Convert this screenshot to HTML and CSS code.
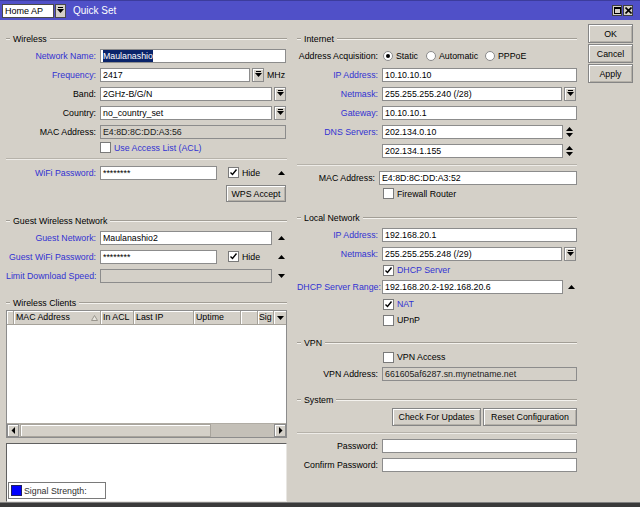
FILE: index.html
```html
<!DOCTYPE html>
<html>
<head>
<meta charset="utf-8">
<title>Quick Set</title>
<link rel="stylesheet" href="styles.css">
</head>
<body>
<div class="titlebar">
  <div class="profile">Home AP</div>
  <div class="tbtn"><svg width="7" height="7" viewBox="0 0 7 7"><rect x="1" y="0" width="5" height="1"/><path d="M0 2h7L3.5 6z"/></svg></div>
  <div class="title">Quick Set</div>
  <div class="winctl">
    <div class="wc"><svg width="7" height="7" viewBox="0 0 7 7"><rect x="0.5" y="0.5" width="6" height="6" fill="none" stroke="#000"/><rect x="0" y="0" width="7" height="2"/></svg></div>
    <div class="wc"><svg width="7" height="7" viewBox="0 0 7 7"><path d="M0.5 0.5L6.5 6.5M6.5 0.5L0.5 6.5" stroke="#000" stroke-width="1.6"/></svg></div>
  </div>
</div>

<div class="main">
  <div class="col left">
    <div class="head"><span class="hl short"></span><span class="ht">Wireless</span><span class="hl"></span></div>
    <div class="row"><span class="lbl blue">Network Name:</span><div class="inp w186"><span class="sel">Maulanashio</span></div></div>
    <div class="row"><span class="lbl blue">Frequency:</span><div class="inp w150">2417</div><div class="ddb ml2"><svg width="7" height="7" viewBox="0 0 7 7"><rect x="1" y="0" width="5" height="1"/><path d="M0 2h7L3.5 6z"/></svg></div><span class="unit">MHz</span></div>
    <div class="row"><span class="lbl">Band:</span><div class="inp w172">2GHz-B/G/N</div><div class="ddb ml2"><svg width="7" height="7" viewBox="0 0 7 7"><rect x="1" y="0" width="5" height="1"/><path d="M0 2h7L3.5 6z"/></svg></div></div>
    <div class="row"><span class="lbl">Country:</span><div class="inp w172">no_country_set</div><div class="ddb ml2"><svg width="7" height="7" viewBox="0 0 7 7"><rect x="1" y="0" width="5" height="1"/><path d="M0 2h7L3.5 6z"/></svg></div></div>
    <div class="row"><span class="lbl">MAC Address:</span><div class="inp dis w186">E4:8D:8C:DD:A3:56</div></div>
    <div class="cbrow h13"><span class="cb"></span><span class="cbt blue">Use Access List (ACL)</span></div>
    <div class="sep"></div>
    <div class="row"><span class="lbl blue">WiFi Password:</span><div class="inp w117">********</div><span class="cb ml11"><svg width="9" height="9" viewBox="0 0 9 9"><path d="M1.5 4.5l2 2 4-5" fill="none" stroke="#000" stroke-width="1.4"/></svg></span><span class="cbt">Hide</span><svg class="tri" width="7" height="4" viewBox="0 0 7 4"><path d="M0 4L3.5 0L7 4z"/></svg></div>
    <div class="btnrow"><div class="btn wps">WPS Accept</div></div>

    <div class="head mt11"><span class="hl short"></span><span class="ht">Guest Wireless Network</span><span class="hl"></span></div>
    <div class="row"><span class="lbl blue">Guest Network:</span><div class="inp w172">Maulanashio2</div><svg class="tri" width="7" height="4" viewBox="0 0 7 4"><path d="M0 4L3.5 0L7 4z"/></svg></div>
    <div class="row"><span class="lbl blue">Guest WiFi Password:</span><div class="inp w117">********</div><span class="cb ml11"><svg width="9" height="9" viewBox="0 0 9 9"><path d="M1.5 4.5l2 2 4-5" fill="none" stroke="#000" stroke-width="1.4"/></svg></span><span class="cbt">Hide</span><svg class="tri" width="7" height="4" viewBox="0 0 7 4"><path d="M0 4L3.5 0L7 4z"/></svg></div>
    <div class="row"><span class="lbl blue">Limit Download Speed:</span><div class="inp dis w172"></div><svg class="tri" width="7" height="4" viewBox="0 0 7 4"><path d="M0 0h7L3.5 4z"/></svg></div>

    <div class="head mt10"><span class="hl short"></span><span class="ht">Wireless Clients</span><span class="hl"></span></div>
    <div class="table">
      <div class="thead">
        <div class="th c0"></div>
        <div class="th c1">MAC Address<svg class="sort" width="7" height="6" viewBox="0 0 7 6"><path d="M0.5 5.5L3.5 0.5L6.5 5.5z" fill="#e8e6e0" stroke="#9a968e"/></svg></div>
        <div class="th c2">In ACL</div>
        <div class="th c3">Last IP</div>
        <div class="th c4">Uptime</div>
        <div class="th c5"></div>
        <div class="th c6">Sig</div>
        <div class="th c7"><svg width="7" height="4" viewBox="0 0 7 4"><path d="M0 0h7L3.5 4z"/></svg></div>
      </div>
      <div class="tbody"></div>
      <div class="hscroll">
        <div class="sbtn"><svg width="5" height="7" viewBox="0 0 5 7"><path d="M4 0v7L0.5 3.5z"/></svg></div>
        <div class="thumb"></div>
        <div class="track"></div>
        <div class="sbtn"><svg width="5" height="7" viewBox="0 0 5 7"><path d="M1 0v7L4.5 3.5z"/></svg></div>
      </div>
    </div>
    <div class="panel">
      <div class="legend"><span class="swatch"></span><span>Signal Strength:</span></div>
    </div>
  </div>

  <div class="col right">
    <div class="head"><span class="hl short"></span><span class="ht">Internet</span><span class="hl"></span></div>
    <div class="row"><span class="lbl">Address Acquisition:</span>
      <span class="opt o1"><span class="radio on"></span><span class="cbt">Static</span></span>
      <span class="opt o2"><span class="radio"></span><span class="cbt">Automatic</span></span>
      <span class="opt"><span class="radio"></span><span class="cbt">PPPoE</span></span>
    </div>
    <div class="row"><span class="lbl blue">IP Address:</span><div class="inp w195">10.10.10.10</div></div>
    <div class="row"><span class="lbl blue">Netmask:</span><div class="inp w180">255.255.255.240 (/28)</div><div class="ddb ml2"><svg width="7" height="7" viewBox="0 0 7 7"><rect x="1" y="0" width="5" height="1"/><path d="M0 2h7L3.5 6z"/></svg></div></div>
    <div class="row"><span class="lbl blue">Gateway:</span><div class="inp w195">10.10.10.1</div></div>
    <div class="row"><span class="lbl blue">DNS Servers:</span><div class="inp w181">202.134.0.10</div><svg class="ud" width="7" height="10" viewBox="0 0 7 10"><path d="M0 4L3.5 0L7 4zM0 6h7L3.5 10z"/></svg></div>
    <div class="row"><span class="lbl"></span><div class="inp w181">202.134.1.155</div><svg class="ud" width="7" height="10" viewBox="0 0 7 10"><path d="M0 4L3.5 0L7 4zM0 6h7L3.5 10z"/></svg></div>
    <div class="sep s8"></div>
    <div class="row"><span class="lbl narrow">MAC Address:</span><div class="inp w198">E4:8D:8C:DD:A3:52</div></div>
    <div class="cbrow h13"><span class="cb"></span><span class="cbt">Firewall Router</span></div>

    <div class="head mt10"><span class="hl short"></span><span class="ht">Local Network</span><span class="hl"></span></div>
    <div class="row"><span class="lbl blue">IP Address:</span><div class="inp w195">192.168.20.1</div></div>
    <div class="row"><span class="lbl blue">Netmask:</span><div class="inp w180">255.255.255.248 (/29)</div><div class="ddb ml2"><svg width="7" height="7" viewBox="0 0 7 7"><rect x="1" y="0" width="5" height="1"/><path d="M0 2h7L3.5 6z"/></svg></div></div>
    <div class="cbrow h14"><span class="cb"><svg width="9" height="9" viewBox="0 0 9 9"><path d="M1.5 4.5l2 2 4-5" fill="none" stroke="#000" stroke-width="1.4"/></svg></span><span class="cbt blue">DHCP Server</span></div>
    <div class="row"><span class="lbl blue">DHCP Server Range:</span><div class="inp w181">192.168.20.2-192.168.20.6</div><svg class="tri2" width="7" height="4" viewBox="0 0 7 4"><path d="M0 4L3.5 0L7 4z"/></svg></div>
    <div class="cbrow h16"><span class="cb"><svg width="9" height="9" viewBox="0 0 9 9"><path d="M1.5 4.5l2 2 4-5" fill="none" stroke="#000" stroke-width="1.4"/></svg></span><span class="cbt blue">NAT</span></div>
    <div class="cbrow h16"><span class="cb"></span><span class="cbt">UPnP</span></div>

    <div class="head mt7"><span class="hl short"></span><span class="ht">VPN</span><span class="hl"></span></div>
    <div class="cbrow h14"><span class="cb"></span><span class="cbt">VPN Access</span></div>
    <div class="row"><span class="lbl">VPN Address:</span><div class="inp dis w195">661605af6287.sn.mynetname.net</div></div>

    <div class="head mt9"><span class="hl short"></span><span class="ht">System</span><span class="hl"></span></div>
    <div class="sysrow"><div class="btn chk">Check For Updates</div><div class="btn rst">Reset Configuration</div></div>
    <div class="sep s9"></div>
    <div class="row"><span class="lbl">Password:</span><div class="inp w195"></div></div>
    <div class="row"><span class="lbl">Confirm Password:</span><div class="inp w195"></div></div>
  </div>

  <div class="col btns">
    <div class="btn side">OK</div>
    <div class="btn side">Cancel</div>
    <div class="btn side">Apply</div>
  </div>
</div>
<div class="bottom"></div>
</body>
</html>
```

FILE: styles.css
```css
html, body {
  margin: 0;
  padding: 0;
}
body {
  width: 640px;
  height: 507px;
  overflow: hidden;
  background: #d4d0c8;
  font-family: "Liberation Sans", Arial, sans-serif;
  font-size: 8.8px;
  color: #000;
  display: flex;
  flex-direction: column;
}

/* title bar */
.titlebar {
  height: 20px;
  flex: none;
  background: #5050c8;
  display: flex;
  align-items: center;
  box-sizing: border-box;
  border-top: 1px solid #3c3c9c;
}
.profile {
  margin-left: 2px;
  width: 52px;
  height: 14px;
  box-sizing: border-box;
  border: 1px solid #4a4a4a;
  background: #fff;
  padding-left: 2px;
  line-height: 12px;
  font-size: 9px;
}
.tbtn {
  margin-left: 1px;
  width: 11px;
  height: 14px;
  box-sizing: border-box;
  border: 1px solid #4a4a4a;
  background: #d4d0c8;
  display: flex;
  align-items: center;
  justify-content: center;
}
.title {
  margin-left: 7px;
  color: #fff;
  font-size: 10px;
}
.winctl {
  margin-left: auto;
  margin-right: 7px;
  display: flex;
  gap: 1px;
}
.wc {
  width: 10px;
  height: 11px;
  box-sizing: border-box;
  border: 1px solid #404040;
  background: #d4d0c8;
  display: flex;
  align-items: center;
  justify-content: center;
}

/* main */
.main {
  flex: 1;
  display: flex;
  padding-left: 6px;
}
.col {
  display: flex;
  flex-direction: column;
  padding-top: 11px;
}
.left { width: 281px; }
.right { width: 280px; margin-left: 10px; }
.btns { width: 45px; margin-left: 11px; padding-top: 3px; }

.bottom {
  height: 4px;
  flex: none;
  background: #3a3a3a;
  border-top: 1px solid #808080;
}

/* section heading */
.head {
  height: 15px;
  flex: none;
  display: flex;
  align-items: center;
}
.hl {
  flex: 1;
  height: 0;
  border-top: 1px solid #a29e96;
  border-bottom: 1px solid #f4f2ee;
}
.hl.short { flex: none; width: 4px; }
.ht { padding: 0 3px; }
.mt7 { margin-top: 7px; }
.mt9 { margin-top: 9px; }
.mt10 { margin-top: 10px; }
.mt11 { margin-top: 11px; }

.sep {
  height: 9px;
  flex: none;
  box-sizing: border-box;
  padding-top: 4px;
}
.sep::before {
  content: "";
  display: block;
  border-top: 1px solid #b6b2aa;
  border-bottom: 1px solid #eeece8;
}
.sep.s8 { height: 8px; }
.sep.s9 { padding-top: 5px; }

/* rows */
.row {
  height: 19px;
  flex: none;
  display: flex;
  align-items: center;
}
.lbl {
  flex: none;
  width: 90px;
  padding-right: 4px;
  text-align: right;
  white-space: nowrap;
}
.right .lbl { width: 81px; }
.right .lbl.narrow { width: 78px; }
.blue { color: #3232d2; }

.inp {
  flex: none;
  height: 14px;
  box-sizing: border-box;
  border: 1px solid #8c8c8c;
  background: #fff;
  padding: 0 2px;
  line-height: 12px;
  white-space: nowrap;
  overflow: hidden;
}
.inp.dis { background: #d4d0c8; color: #202020; }
.sel { background: #0a246a; color: #fff; display: inline-block; height: 12px; }
.w117 { width: 117px; }
.w150 { width: 150px; }
.w172 { width: 172px; }
.w180 { width: 180px; }
.w181 { width: 181px; }
.w186 { width: 186px; }
.w195 { width: 195px; }
.w198 { width: 198px; }

.ddb {
  flex: none;
  width: 12px;
  height: 14px;
  box-sizing: border-box;
  border: 1px solid #8c8c8c;
  background: #d4d0c8;
  box-shadow: inset 1px 1px 0 #fff;
  display: flex;
  align-items: center;
  justify-content: center;
}
.ml2 { margin-left: 2px; }
.ml11 { margin-left: 11px; }
.unit { margin-left: 3px; }

.tri { margin-left: auto; margin-right: 2px; flex: none; }
.tri2 { margin-left: 5px; flex: none; }
.ud { margin-left: 3px; flex: none; }

/* checkboxes & radios */
.cbrow {
  flex: none;
  display: flex;
  align-items: center;
  padding-left: 94px;
}
.right .cbrow { padding-left: 86px; }
.h13 { height: 13px; }
.h14 { height: 14px; }
.h16 { height: 16px; }
.cb {
  flex: none;
  width: 11px;
  height: 11px;
  box-sizing: border-box;
  border: 1px solid #7a7a7a;
  background: #fff;
  display: flex;
  align-items: center;
  justify-content: center;
}
.cbt { margin-left: 3px; white-space: nowrap; }

.opt { display: flex; align-items: center; flex: none; }
.opt.o1 { width: 43px; margin-left: 1px; }
.opt.o2 { width: 59px; }
.radio {
  flex: none;
  width: 10px;
  height: 10px;
  box-sizing: border-box;
  border: 1px solid #8a8a8a;
  border-radius: 50%;
  background: #fff;
  display: flex;
  align-items: center;
  justify-content: center;
}
.radio.on::after {
  content: "";
  width: 4px;
  height: 4px;
  border-radius: 50%;
  background: #000;
}

/* buttons */
.btn {
  box-sizing: border-box;
  border: 1px solid #858585;
  background: #d4d0c8;
  box-shadow: inset 1px 1px 0 #fff, inset -1px -1px 0 #b4b0a8;
  display: flex;
  align-items: center;
  justify-content: center;
  white-space: nowrap;
}
.btnrow {
  height: 20px;
  flex: none;
  display: flex;
  align-items: flex-end;
  justify-content: flex-end;
  padding-right: 1px;
}
.btn.wps { width: 60px; height: 17px; }
.sysrow {
  height: 20px;
  flex: none;
  display: flex;
  justify-content: flex-end;
  align-items: flex-start;
  padding-top: 1px;
  box-sizing: border-box;
  gap: 2px;
}
.btn.chk { width: 89px; height: 18px; }
.btn.rst { width: 94px; height: 18px; }
.btn.side { height: 19px; margin-top: 1px; }

/* table */
.table {
  flex: none;
  height: 128px;
  box-sizing: border-box;
  border: 1px solid #8c8c8c;
  background: #fff;
  display: flex;
  flex-direction: column;
}
.thead {
  height: 14px;
  flex: none;
  display: flex;
  background: #d4d0c8;
}
.th {
  flex: none;
  box-sizing: border-box;
  height: 14px;
  border-right: 1px solid #a6a29a;
  border-bottom: 1px solid #a6a29a;
  box-shadow: inset 1px 1px 0 #fff;
  padding-left: 2px;
  line-height: 13px;
  white-space: nowrap;
  overflow: hidden;
  display: flex;
  align-items: center;
}
.c0 { width: 7px; }
.c1 { width: 87px; }
.c2 { width: 33px; }
.c3 { width: 60px; }
.c4 { width: 47px; }
.c5 { width: 17px; }
.c6 { width: 16px; padding-left: 1px; }
.c7 { width: 12px; justify-content: center; padding-left: 0; border-right: 0; }
.sort { margin-left: auto; margin-right: 2px; }
.tbody { flex: 1; background: #fff; }
.hscroll {
  height: 13px;
  flex: none;
  display: flex;
  background: #c4c0b8;
  border-top: 1px solid #b0aca4;
}
.sbtn {
  flex: none;
  width: 12px;
  box-sizing: border-box;
  border: 1px solid #8c8c8c;
  background: #d4d0c8;
  box-shadow: inset 1px 1px 0 #fff;
  display: flex;
  align-items: center;
  justify-content: center;
}
.thumb {
  flex: none;
  width: 191px;
  margin-left: 1px;
  box-sizing: border-box;
  border: 1px solid #a8a49c;
  background: #d4d0c8;
  box-shadow: inset 1px 1px 0 #fff;
}
.track { flex: 1; background: #c4c0b8; }

.panel {
  flex: none;
  margin-top: 5px;
  height: 59px;
  box-sizing: border-box;
  border-top: 1px solid #606060;
  border-left: 1px solid #606060;
  border-right: 1px solid #e8e6e2;
  border-bottom: 1px solid #e8e6e2;
  background: #fff;
  display: flex;
  flex-direction: column;
  justify-content: flex-end;
  padding: 0 0 2px 1px;
}
.legend {
  width: 98px;
  height: 17px;
  box-sizing: border-box;
  border: 1px solid #7a7a7a;
  background: #fff;
  display: flex;
  align-items: center;
  padding-left: 2px;
  color: #303030;
}
.swatch {
  width: 11px;
  height: 11px;
  box-sizing: border-box;
  background: #0000ff;
  border: 1px solid #202060;
  margin-right: 2px;
}
```
